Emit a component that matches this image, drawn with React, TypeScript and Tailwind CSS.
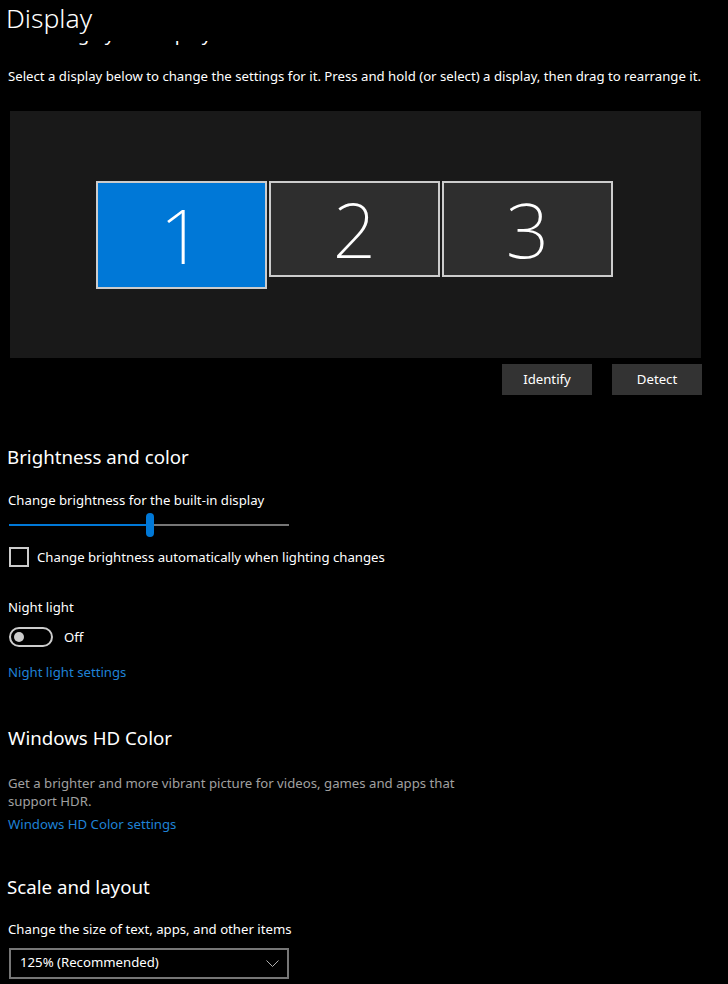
import { ReactNode } from 'react';

const monitors = [
  { id: 1, active: true },
  { id: 2, active: false },
  { id: 3, active: false },
];

function Heading({ children, className = '' }: { children: ReactNode; className?: string }) {
  return <h2 className={`pl-[7px] text-[18.7px] leading-[28px] text-white ${className}`}>{children}</h2>;
}

function Label({ children, className = '' }: { children: ReactNode; className?: string }) {
  return <p className={`pl-[8px] text-[13.2px] leading-[20px] text-white ${className}`}>{children}</p>;
}

function Link({ children, className = '' }: { children: ReactNode; className?: string }) {
  return (
    <a href="#" className={`block w-fit pl-[8px] text-[13.2px] leading-[20px] text-[#1f82d6] ${className}`}>
      {children}
    </a>
  );
}

export default function App() {
  return (
    <div className="h-[984px] w-[728px] overflow-hidden bg-black font-['Noto_Sans',sans-serif] text-white">
      <h1 className="h-[36px] pl-[6px] text-[26.5px] font-light leading-[36px]">Display</h1>

      {/* heading scrolled under the title bar, only descenders peek out */}
      <div className="mt-[5px] h-[5px] overflow-hidden pl-[8px]">
        <p className="-mt-[20px] text-[18.7px] leading-[26px]">Rearrange your displays</p>
      </div>

      <Label className="mt-[20px] pl-[7px]">
        Select a display below to change the settings for it. Press and hold (or select) a display, then drag to rearrange it.
      </Label>

      <div className="ml-[10px] mt-[25px] flex h-[247px] w-[691px] items-start gap-[2px] bg-[#191919] pl-[86px] pt-[70px]">
        {monitors.map((m) => (
          <div
            key={m.id}
            className={`flex w-[171px] items-center justify-center border-2 border-[#cccccc] ${
              m.active ? 'h-[108px] bg-[#0078d7]' : 'h-[96px] bg-[#2e2e2e]'
            }`}
          >
            <span className="text-[76px] font-extralight leading-none">{m.id}</span>
          </div>
        ))}
      </div>

      <div className="mt-[6px] flex w-[702px] justify-end gap-[20px]">
        <button type="button" className="h-[31px] w-[90px] bg-[#333333] text-[13.2px] text-white">
          Identify
        </button>
        <button type="button" className="h-[31px] w-[90px] bg-[#333333] text-[13.2px] text-white">
          Detect
        </button>
      </div>

      <Heading className="mt-[48px]">Brightness and color</Heading>
      <Label className="mt-[19px]">Change brightness for the built-in display</Label>

      <div className="ml-[9px] mt-[3px] flex h-[24px] w-[280px] items-center">
        <div className="h-[2px] w-[137px] bg-[#0078d7]" />
        <div className="h-[24px] w-[8px] rounded-full bg-[#0078d7]" />
        <div className="h-[2px] flex-1 bg-[#767676]" />
      </div>

      <div className="ml-[9px] mt-[10px] flex h-[20px] items-center gap-[8px]">
        <div className="h-[20px] w-[20px] border-2 border-[#cccccc]" />
        <span className="text-[13.2px] leading-[20px]">Change brightness automatically when lighting changes</span>
      </div>

      <Label className="mt-[30px]">Night light</Label>

      <div className="ml-[9px] mt-[10px] flex h-[20px] items-center gap-[11px]">
        <div className="flex h-[20px] w-[44px] items-center rounded-full border-2 border-[#cccccc] pl-[3px]">
          <div className="h-[10px] w-[10px] rounded-full bg-[#cccccc]" />
        </div>
        <span className="text-[13.2px] leading-[20px]">Off</span>
      </div>

      <Link className="mt-[15px]">Night light settings</Link>

      <Heading className="mt-[42px] pl-[8px]">Windows HD Color</Heading>
      <p className="mt-[22px] w-[470px] pl-[8px] text-[13.2px] leading-[18px] text-[#a0a0a0]">
        Get a brighter and more vibrant picture for videos, games and apps that support HDR.
      </p>
      <Link className="mt-[4px]">Windows HD Color settings</Link>

      <Heading className="mt-[39px]">Scale and layout</Heading>
      <Label className="mt-[18px]">Change the size of text, apps, and other items</Label>

      <div className="ml-[9px] mt-[9px] flex h-[31px] w-[280px] items-start justify-between border-2 border-[#767676] pl-[9px] pr-[8px] pt-[2px]">
        <span className="text-[13.2px] leading-[20px]">125% (Recommended)</span>
        <svg width="13" height="7" viewBox="0 0 13 7" className="mt-[8px]" fill="none">
          <polyline points="0.5,0.5 6.5,6.5 12.5,0.5" stroke="#b0b0b0" strokeWidth="1" />
        </svg>
      </div>
    </div>
  );
}
